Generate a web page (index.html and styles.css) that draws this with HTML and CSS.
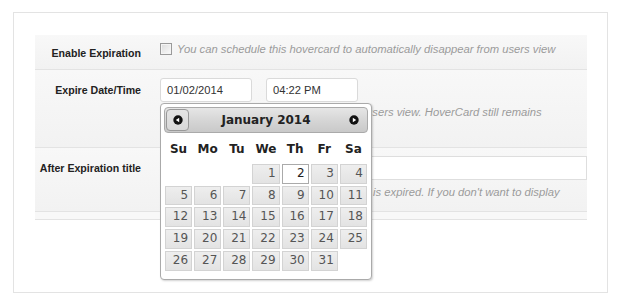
FILE: index.html
```html
<!DOCTYPE html>
<html>
<head>
<meta charset="utf-8">
<link rel="stylesheet" href="styles.css">
</head>
<body>
<div class="card">
  <div class="form">
    <div class="row r1">
      <div class="label">Enable Expiration</div>
      <div class="field field-check">
        <span class="check"></span>
        <span class="desc">You can schedule this hovercard to automatically disappear from users view</span>
      </div>
    </div>
    <div class="row r2">
      <div class="label">Expire Date/Time</div>
      <div class="field">
        <div class="inputs">
          <div class="date-wrap">
            <div class="input">01/02/2014</div>
            <div class="datepicker">
              <div class="dp-header">
                <a class="dp-btn dp-prev"><svg width="16" height="16" viewBox="0 0 16 16"><circle cx="8" cy="8" r="4.7" fill="#111"/><polygon points="5.8,8 9.2,5.7 9.2,10.3" fill="#fff"/></svg></a>
                <span class="dp-title">January 2014</span>
                <a class="dp-btn dp-next"><svg width="16" height="16" viewBox="0 0 16 16"><circle cx="8" cy="8" r="4.7" fill="#111"/><polygon points="10.2,8 6.8,5.7 6.8,10.3" fill="#fff"/></svg></a>
              </div>
              <table class="dp-cal">
                <thead>
                  <tr><th>Su</th><th>Mo</th><th>Tu</th><th>We</th><th>Th</th><th>Fr</th><th>Sa</th></tr>
                </thead>
                <tbody>
                  <tr><td></td><td></td><td></td><td><a>1</a></td><td><a class="active">2</a></td><td><a>3</a></td><td><a>4</a></td></tr>
                  <tr><td><a>5</a></td><td><a>6</a></td><td><a>7</a></td><td><a>8</a></td><td><a>9</a></td><td><a>10</a></td><td><a>11</a></td></tr>
                  <tr><td><a>12</a></td><td><a>13</a></td><td><a>14</a></td><td><a>15</a></td><td><a>16</a></td><td><a>17</a></td><td><a>18</a></td></tr>
                  <tr><td><a>19</a></td><td><a>20</a></td><td><a>21</a></td><td><a>22</a></td><td><a>23</a></td><td><a>24</a></td><td><a>25</a></td></tr>
                  <tr><td><a>26</a></td><td><a>27</a></td><td><a>28</a></td><td><a>29</a></td><td><a>30</a></td><td><a>31</a></td><td></td></tr>
                </tbody>
              </table>
            </div>
          </div>
          <div class="input">04:22 PM</div>
        </div>
        <p class="desc desc-date">users view. HoverCard still remains</p>
      </div>
    </div>
    <div class="row r3">
      <div class="label">After Expiration title</div>
      <div class="field">
        <div class="input wide"></div>
        <p class="desc desc-title">is expired. If you don't want to display</p>
      </div>
    </div>
    <div class="row r4"></div>
  </div>
</div>
</body>
</html>
```

FILE: styles.css
```css
body {
  margin: 0;
  background: #fff;
  font-family: "Liberation Sans", Arial, sans-serif;
}

.card {
  margin: 12px 0 0 13px;
  width: 595px;
  height: 281px;
  box-sizing: border-box;
  border: 1px solid #e3e3e3;
  padding: 22px 20px 0 21px;
}

.row {
  display: grid;
  grid-template-columns: 115px 1fr;
  box-sizing: border-box;
  border-bottom: 1px solid #e3e3e3;
  background: linear-gradient(#f8f8f8, #f2f2f2);
}

.r1 { height: 35px; }
.r2 { height: 78px; }
.r3 { height: 64px; }
.r4 { height: 8px; background: #f8f8f8; }

.label {
  text-align: right;
  padding-right: 9px;
  font-weight: bold;
  font-size: 10.6px;
  line-height: 14px;
  color: #222;
  padding-top: 13px;
}

.r1 .label { padding-top: 11px; }

.field {
  padding-left: 10px;
  padding-top: 8px;
  min-width: 0;
}

.field-check {
  display: flex;
  align-items: center;
  gap: 5px;
  padding-top: 7px;
  height: 14px;
}

.check {
  width: 12px;
  height: 12px;
  box-sizing: border-box;
  border: 1px solid #9a9a9a;
  background: linear-gradient(135deg, #dcdcdc, #fafafa);
  box-shadow: inset 0 0 0 1px #f4f4f4;
}

.desc {
  font-style: italic;
  font-size: 11.25px;
  line-height: 14px;
  color: #9b9b9b;
  white-space: nowrap;
  margin: 3px 0 0;
}

.field-check .desc { margin: 0; }

.desc-date { margin-left: 206px; }
.desc-title { margin: 5px 0 0 213px; }

.inputs {
  display: flex;
  gap: 14px;
}

.date-wrap {
  position: relative;
}

.input {
  width: 92px;
  height: 24px;
  box-sizing: border-box;
  border: 1px solid #dadada;
  border-radius: 3px;
  background: #fff;
  padding: 0 6px;
  font-size: 11.2px;
  line-height: 22px;
  color: #333;
}

.input.wide {
  width: 100%;
  border-radius: 0;
  border-color: #dedede;
}

/* datepicker */
.datepicker {
  position: absolute;
  top: 25px;
  left: 0;
  z-index: 5;
  width: 212px;
  height: 177px;
  box-sizing: border-box;
  border: 1px solid #aaa;
  border-radius: 4px;
  background: #fff;
  padding: 3px;
  box-shadow: 1px 1px 2px rgba(0, 0, 0, 0.18);
  font-family: "DejaVu Sans", Verdana, sans-serif;
}

.dp-header {
  position: relative;
  height: 26px;
  box-sizing: border-box;
  border: 1px solid #aaa;
  border-radius: 4px;
  background: linear-gradient(#e6e6e6, #d6d6d6 50%, #c9c9c9);
  display: flex;
  align-items: center;
  justify-content: center;
}

.dp-title {
  font-weight: bold;
  font-size: 12px;
  color: #222;
  line-height: 14px;
}

.dp-btn {
  position: absolute;
  top: 1px;
  width: 23px;
  height: 22px;
  box-sizing: border-box;
  display: flex;
  align-items: center;
  justify-content: center;
}

.dp-btn svg { display: block; }

.dp-prev {
  left: 1px;
  border: 1px solid #999;
  border-radius: 4px;
  background: linear-gradient(#e4e4e4, #d8d8d8);
}

.dp-next {
  right: 2px;
}

.dp-cal {
  width: 100%;
  border-collapse: collapse;
  table-layout: fixed;
  margin: 2px 0 0;
}

.dp-cal th {
  font-weight: bold;
  font-size: 12px;
  color: #222;
  line-height: 14px;
  padding: 7px 0;
  text-align: center;
}

.dp-cal td {
  padding: 1px;
}

.dp-cal td a {
  display: block;
  box-sizing: border-box;
  border: 1px solid #d3d3d3;
  background: linear-gradient(#eeeeee, #e3e3e3);
  color: #555;
  font-size: 12px;
  line-height: 17.7px;
  text-align: right;
  padding-right: 3px;
}

.dp-cal td a.active {
  background: #fff;
  border-color: #aaa;
  color: #222;
}
```
